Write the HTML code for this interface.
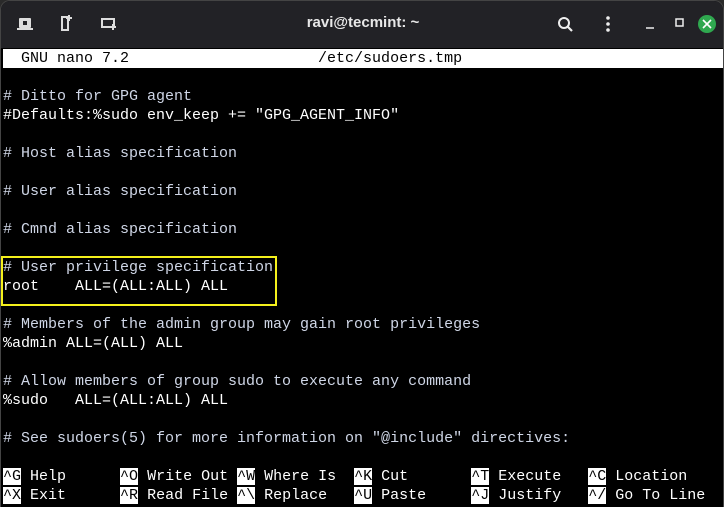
<!DOCTYPE html>
<html><head><meta charset="utf-8"><style>
*{margin:0;padding:0;box-sizing:border-box}
body{width:724px;height:507px;background:#2a2a2a;overflow:hidden;position:relative;font-family:"Liberation Sans",sans-serif}
.win{position:absolute;left:0;top:0;width:724px;height:507px;background:#000;border-radius:10px 10px 0 0;overflow:hidden;border:1px solid #444;border-bottom:none}
.tb{position:absolute;left:0;top:0;width:724px;height:47px;background:#222226;color:#eee}
.title{position:absolute;left:0;right:0;top:13px;text-align:center;font-size:15px;font-weight:bold;color:#e8e8e8}
.term{position:absolute;left:2px;top:48px;font-family:"Liberation Mono",monospace;font-size:15px;line-height:19px;color:#fff;white-space:pre}
.row{height:19px}
.c{color:#cfd6e6}
.hdr{background:#fff;color:#000;width:720px}
.k{background:#fff;color:#000}
.box{position:absolute;left:0;top:255px;width:276px;height:50px;border:2px solid #f4f01c}
</style></head><body>
<div class="win">
<div class="tb">
<svg width="724" height="47" style="position:absolute;left:0;top:0">
<g fill="#ddd">
<rect x="18" y="17" width="12" height="10" rx="1"/>
<rect x="16" y="27" width="16" height="2"/>
</g>
<rect x="22" y="20" width="4" height="4" fill="#222226"/>
<path d="M61 16h6v13h-6z" fill="none" stroke="#ddd" stroke-width="2"/>
<path d="M68 14v6M65 17h6" stroke="#ddd" stroke-width="2"/>
<path d="M101 18h12v8h-12z" fill="none" stroke="#ddd" stroke-width="2"/>
<path d="M112 23v6M109 26h6" stroke="#ddd" stroke-width="2"/>
<circle cx="563" cy="22" r="5" fill="none" stroke="#eee" stroke-width="2"/>
<path d="M567 26l4 4" stroke="#eee" stroke-width="2.2"/>
<circle cx="607" cy="17" r="1.8" fill="#eee"/><circle cx="607" cy="23" r="1.8" fill="#eee"/><circle cx="607" cy="29" r="1.8" fill="#eee"/>
<path d="M645 27h8" stroke="#eee" stroke-width="1.5"/>
<rect x="675" y="18" width="7" height="7" fill="none" stroke="#eee" stroke-width="1.5"/>
<circle cx="706" cy="23" r="9" fill="#2fa84f"/>
<path d="M702 19l8 8M710 19l-8 8" stroke="#fff" stroke-width="1.6"/>
</svg>
<div class="title">ravi@tecmint: ~</div>
</div>
<div class="term"><div class="row hdr">  GNU nano 7.2                     /etc/sudoers.tmp</div><div class="row"></div><div class="row c"># Ditto for GPG agent</div><div class="row">#Defaults:%sudo env_keep += "GPG_AGENT_INFO"</div><div class="row"></div><div class="row c"># Host alias specification</div><div class="row"></div><div class="row c"># User alias specification</div><div class="row"></div><div class="row c"># Cmnd alias specification</div><div class="row"></div><div class="row c"># User privilege specification</div><div class="row">root    ALL=(ALL:ALL) ALL</div><div class="row"></div><div class="row c"># Members of the admin group may gain root privileges</div><div class="row">%admin ALL=(ALL) ALL</div><div class="row"></div><div class="row c"># Allow members of group sudo to execute any command</div><div class="row">%sudo   ALL=(ALL:ALL) ALL</div><div class="row"></div><div class="row c"># See sudoers(5) for more information on "@include" directives:</div><div class="row"></div><div class="row"><span class="k">^G</span> Help      <span class="k">^O</span> Write Out <span class="k">^W</span> Where Is  <span class="k">^K</span> Cut       <span class="k">^T</span> Execute   <span class="k">^C</span> Location</div><div class="row"><span class="k">^X</span> Exit      <span class="k">^R</span> Read File <span class="k">^\</span> Replace   <span class="k">^U</span> Paste     <span class="k">^J</span> Justify   <span class="k">^/</span> Go To Line</div></div>
<div class="box"></div>
</div>
</body></html>
